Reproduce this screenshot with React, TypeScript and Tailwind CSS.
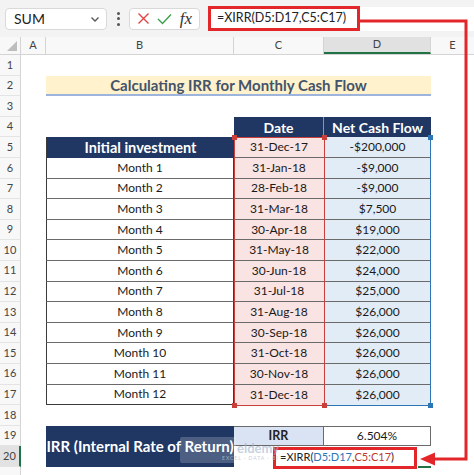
import React from "react";

const monthRows = [
  { n: 6, b: "Month 1", c: "31-Jan-18", d: "-$9,000" },
  { n: 7, b: "Month 2", c: "28-Feb-18", d: "-$9,000" },
  { n: 8, b: "Month 3", c: "31-Mar-18", d: "$7,500" },
  { n: 9, b: "Month 4", c: "30-Apr-18", d: "$19,000" },
  { n: 10, b: "Month 5", c: "31-May-18", d: "$22,000" },
  { n: 11, b: "Month 6", c: "30-Jun-18", d: "$24,000" },
  { n: 12, b: "Month 7", c: "31-Jul-18", d: "$25,000" },
  { n: 13, b: "Month 8", c: "31-Aug-18", d: "$26,000" },
  { n: 14, b: "Month 9", c: "30-Sep-18", d: "$26,000" },
  { n: 15, b: "Month 10", c: "31-Oct-18", d: "$26,000" },
  { n: 16, b: "Month 11", c: "30-Nov-18", d: "$26,000" },
  { n: 17, b: "Month 12", c: "31-Dec-18", d: "$26,000" },
];

function RowHead({ n, active }: { n?: number; active?: boolean }) {
  return (
    <div
      className={
        "w-[21px] h-[20.6px] shrink-0 flex items-center justify-center text-[11px] text-[#444] border-b border-[#e4e4e4] " +
        (active ? "bg-[#e2e2e2] border-r-2 border-r-[#217346]" : "bg-[#f8f8f8] border-r border-r-[#d4d4d4]")
      }
    >
      {n}
    </div>
  );
}

function EmptyRow({ n }: { n: number }) {
  return (
    <div className="flex h-[20.6px]">
      <RowHead n={n} />
      <div className="flex-1" />
    </div>
  );
}

export default function App() {
  return (
    <div className="relative w-[474px] h-[475px] overflow-hidden bg-white font-['Lato',sans-serif] text-[#1a1a1a]">
      {/* Toolbar */}
      <div className="h-[37px] bg-[#f3f3f3] flex items-center pl-[5px] pr-0">
        <div className="w-[102px] h-[22px] bg-white border border-[#d9d9d9] rounded-[4px] flex items-center justify-between pl-[8px] pr-[5px]">
          <span className="text-[14px] text-[#222]">SUM</span>
          <svg width="12" height="12" viewBox="0 0 12 12">
            <path d="M2.5 4.5 L6 8 L9.5 4.5" fill="none" stroke="#555" strokeWidth="1.3" />
          </svg>
        </div>
        <div className="w-[22px] flex flex-col items-center justify-center gap-[2.5px]">
          <span className="w-[3px] h-[3px] rounded-full bg-[#555]" />
          <span className="w-[3px] h-[3px] rounded-full bg-[#555]" />
          <span className="w-[3px] h-[3px] rounded-full bg-[#555]" />
        </div>
        <div className="w-[71px] h-[22px] bg-white border border-[#d9d9d9] rounded-[4px] flex items-center justify-between px-[7px]">
          <svg width="13" height="13" viewBox="0 0 13 13">
            <path d="M1.5 1.5 L11.5 11.5 M11.5 1.5 L1.5 11.5" stroke="#e04545" strokeWidth="1.4" />
          </svg>
          <svg width="15" height="12" viewBox="0 0 15 12">
            <path d="M1 6 L5.5 10.5 L14 1.5" fill="none" stroke="#3aa14a" strokeWidth="1.4" />
          </svg>
          <span className="font-['Liberation_Serif',serif] italic text-[17px] text-[#333] leading-none">fx</span>
        </div>
        <div className="ml-[8px] flex-1 h-[24px] bg-white flex items-center">
          <div className="w-[152px] h-[25px] border-[3px] border-[#e3262a] bg-white flex items-center pl-[6px] text-[12.5px] text-[#222] whitespace-nowrap">
            =XIRR(D5:D17,C5:C17)
          </div>
        </div>
      </div>

      {/* Column headers */}
      <div className="flex h-[18px] bg-[#f8f8f8] border-b border-[#d4d4d4] text-[11px] text-[#444]">
        <div className="w-[21px] shrink-0 border-r border-[#d4d4d4] relative">
          <svg className="absolute right-[3px] bottom-[3px]" width="10" height="10" viewBox="0 0 10 10">
            <path d="M10 0 L10 10 L0 10 Z" fill="#bdbdbd" />
          </svg>
        </div>
        <div className="w-[25px] shrink-0 border-r border-[#d4d4d4] flex items-center justify-center">A</div>
        <div className="w-[188px] shrink-0 border-r border-[#d4d4d4] flex items-center justify-center">B</div>
        <div className="w-[90px] shrink-0 border-r border-[#d4d4d4] flex items-center justify-center">C</div>
        <div className="w-[107px] shrink-0 border-r border-[#d4d4d4] bg-[#e1e1e1] border-b-2 border-b-[#217346] flex items-center justify-center">D</div>
        <div className="flex-1 flex items-center justify-center">E</div>
      </div>

      {/* Sheet body */}
      <div className="relative">
        <EmptyRow n={1} />
        {/* Row 2 title */}
        <div className="flex h-[20.6px]">
          <RowHead n={2} />
          <div className="w-[25px] shrink-0" />
          <div className="w-[385px] shrink-0 bg-[#fff2cc] border-b-2 border-[#9db4dc] flex items-center justify-center text-[15px] font-bold text-[#44546a] whitespace-nowrap">
            Calculating IRR for Monthly Cash Flow
          </div>
          <div className="flex-1" />
        </div>
        <EmptyRow n={3} />
        {/* Row 4 header */}
        <div className="flex h-[20.6px]">
          <RowHead n={4} />
          <div className="w-[25px] shrink-0" />
          <div className="w-[188px] shrink-0" />
          <div className="w-[90px] shrink-0 bg-[#203764] border-r border-[#8b94aa] flex items-center justify-center text-white font-bold text-[14px]">
            Date
          </div>
          <div className="w-[107px] shrink-0 bg-[#203764] flex items-center justify-center text-white font-bold text-[14px] whitespace-nowrap">
            Net Cash Flow
          </div>
          <div className="flex-1" />
        </div>
        {/* Row 5 */}
        <div className="flex h-[20.6px]">
          <RowHead n={5} />
          <div className="w-[25px] shrink-0" />
          <div className="w-[188px] shrink-0 bg-[#203764] border-l border-[#3a3a3a] flex items-center justify-center text-white font-bold text-[14.5px]">
            Initial investment
          </div>
          <div className="w-[90px] shrink-0 bg-[#f9e3e3] border-b border-[#6a6a6a] flex items-center justify-center text-[12px]">
            31-Dec-17
          </div>
          <div className="w-[107px] shrink-0 bg-[#e1ecf7] border-b border-[#6a6a6a] flex items-center justify-center text-[12px]">
            -$200,000
          </div>
          <div className="flex-1" />
        </div>
        {monthRows.map((r, i) => (
          <div key={r.n} className="flex h-[20.6px]">
            <RowHead n={r.n} />
            <div className="w-[25px] shrink-0" />
            <div
              className={
                "w-[188px] shrink-0 bg-white border-l border-r border-[#3a3a3a] flex items-center justify-center text-[12px] " +
                (i === monthRows.length - 1 ? "border-b border-b-[#3a3a3a]" : "border-b border-b-[#6a6a6a]")
              }
            >
              {r.b}
            </div>
            <div
              className={
                "w-[90px] shrink-0 bg-[#f9e3e3] flex items-center justify-center text-[12px] " +
                (i === monthRows.length - 1 ? "" : "border-b border-[#6a6a6a]")
              }
            >
              {r.c}
            </div>
            <div
              className={
                "w-[107px] shrink-0 bg-[#e1ecf7] flex items-center justify-center text-[12px] " +
                (i === monthRows.length - 1 ? "" : "border-b border-[#6a6a6a]")
              }
            >
              {r.d}
            </div>
            <div className="flex-1" />
          </div>
        ))}
        <EmptyRow n={18} />
        {/* Rows 19-20 */}
        <div className="flex h-[41.2px]">
          <div className="flex flex-col">
            <RowHead n={19} />
            <RowHead n={20} active />
          </div>
          <div className="w-[25px] shrink-0" />
          <div className="w-[188px] shrink-0 bg-[#203764] flex items-center justify-center text-white font-bold text-[15px] whitespace-nowrap">
            IRR (Internal Rate of Return)
          </div>
          <div className="w-[197px] shrink-0 flex flex-col">
            <div className="flex h-[20.6px]">
              <div className="w-[90px] shrink-0 bg-[#dae3f3] border-t border-b border-r border-[#6a6a6a] flex items-center justify-center font-bold text-[12.5px] text-[#222]">
                IRR
              </div>
              <div className="w-[107px] shrink-0 bg-white border-t border-b border-r border-[#6a6a6a] flex items-center justify-center text-[12px]">
                6.504%
              </div>
            </div>
            <div className="flex h-[20.6px] items-center">
              <div className="ml-[39px] w-[144px] shrink-0 h-[22px] mt-[2px] border-[3px] border-[#e3262a] bg-white flex items-center pl-[4px] text-[11px] whitespace-nowrap text-[#222] overflow-hidden">
                <span>=XIRR(</span>
                <span className="text-[#2e75b6]">D5:D17</span>
                <span>,</span>
                <span className="text-[#c0392b]">C5:C17</span>
                <span>)</span>
              </div>
            </div>
          </div>
          <div className="flex-1" />
        </div>
        <div className="flex h-[20.6px]">
          <RowHead />
          <div className="flex-1" />
        </div>

        {/* Range highlights (overlay) */}
        <div className="absolute left-[234px] top-[82px] w-[91px] h-[268.5px] border-[1.5px] border-[#c9403a] pointer-events-none" />
        <div className="absolute left-[324px] top-[82px] w-[107px] h-[268.5px] border-r-[1.5px] border-b-[1.5px] border-[#2e75b6] pointer-events-none" />
        <div className="absolute left-[232px] top-[80px] w-[5px] h-[5px] bg-[#c9403a]" />
        <div className="absolute left-[322px] top-[80px] w-[5px] h-[5px] bg-[#c9403a]" />
        <div className="absolute left-[232px] top-[348px] w-[5px] h-[5px] bg-[#c9403a]" />
        <div className="absolute left-[322px] top-[348px] w-[5px] h-[5px] bg-[#c9403a]" />
        <div className="absolute left-[428px] top-[80px] w-[5px] h-[5px] bg-[#2e75b6]" />
        <div className="absolute left-[428px] top-[348px] w-[5px] h-[5px] bg-[#2e75b6]" />

        {/* Active cell bottom edge */}
        <div className="absolute left-[418px] top-[411px] w-[13px] h-[2px] bg-[#217346]" />

        {/* Watermark */}
        <div className="absolute left-[180px] top-[382px] w-[56px] h-[26px] bg-white/20 rounded-[2px] pointer-events-none" />
        <div className="absolute left-[237px] top-[387px] text-[13px] font-bold text-[#9fb3cc] opacity-60 leading-none pointer-events-none">
          eldemy
        </div>
        <div className="absolute left-[222px] top-[401px] text-[5px] tracking-[1px] text-[#b8c4d4] opacity-80 leading-none pointer-events-none">
          EXCEL · DATA · BI
        </div>
      </div>

      {/* Annotation arrow */}
      <svg className="absolute left-0 top-0 pointer-events-none" width="474" height="475" viewBox="0 0 474 475">
        <path d="M360 21 L466 21 L466 459 L432 459" fill="none" stroke="#e3262a" strokeWidth="3" />
        <path d="M420 459 L435 452.5 L435 465.5 Z" fill="#e3262a" />
      </svg>
    </div>
  );
}
